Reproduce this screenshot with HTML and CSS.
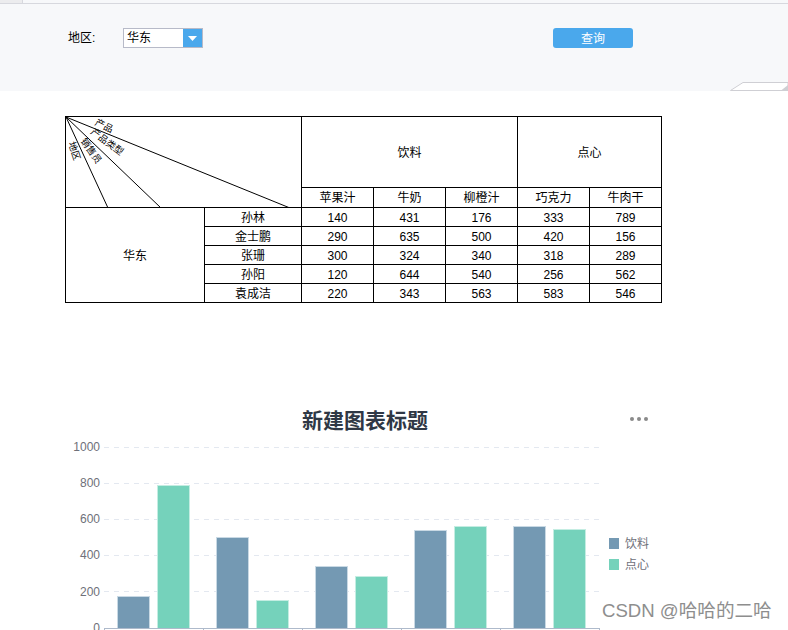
FILE: index.html
```html
<!DOCTYPE html>
<html lang="zh-CN">
<head>
<meta charset="utf-8">
<title>报表</title>
<link rel="stylesheet" href="styles.css">
</head>
<body>
<div class="topbar"><div class="topbar-left"></div></div>
<div class="filter">
  <div class="field">
    <span class="label">地区:</span>
    <div class="select">
      <span class="select-value">华东</span>
      <span class="select-btn"><svg width="9" height="5" viewBox="0 0 9 5"><path d="M0 0H9L4.5 5Z" fill="#fff"/></svg></span>
    </div>
  </div>
  <button class="query">查询</button>
  <svg class="tab" width="58" height="9" viewBox="0 0 58 9"><path d="M13 0.5H58V8.5H0.5Z" fill="#fff" stroke="#cfcfd4"/><path d="M51 8.5L58 3V8.5Z" fill="#cfcfd4"/></svg>
</div>

<table class="report">
  <colgroup>
    <col class="c-area"><col class="c-name"><col class="c-val"><col class="c-val"><col class="c-val"><col class="c-val"><col class="c-val">
  </colgroup>
  <tr class="h1">
    <td class="diag" rowspan="2" colspan="2">
      <svg class="diag-svg" width="236" height="91" viewBox="0 0 236 91">
        <g stroke="#000" stroke-width="1">
          <line x1="0" y1="0" x2="224" y2="91"/>
          <line x1="0" y1="0" x2="95" y2="91"/>
          <line x1="0" y1="0" x2="42" y2="91"/>
        </g>
        <g class="diag-text">
          <text x="38" y="12" transform="rotate(26 38 9)" text-anchor="middle">产品</text>
          <text x="41" y="28" transform="rotate(37 41 25)" text-anchor="middle">产品类型</text>
          <text x="25" y="37" transform="rotate(55 25 34)" text-anchor="middle">销售员</text>
          <text x="8" y="37" transform="rotate(72 8 34)" text-anchor="middle">地区</text>
        </g>
      </svg>
    </td>
    <td colspan="3">饮料</td>
    <td colspan="2">点心</td>
  </tr>
  <tr class="h2">
    <td>苹果汁</td><td>牛奶</td><td>柳橙汁</td><td>巧克力</td><td>牛肉干</td>
  </tr>
  <tr class="row">
    <td rowspan="5">华东</td><td>孙林</td><td>140</td><td>431</td><td>176</td><td>333</td><td>789</td>
  </tr>
  <tr class="row"><td>金士鹏</td><td>290</td><td>635</td><td>500</td><td>420</td><td>156</td></tr>
  <tr class="row"><td>张珊</td><td>300</td><td>324</td><td>340</td><td>318</td><td>289</td></tr>
  <tr class="row"><td>孙阳</td><td>120</td><td>644</td><td>540</td><td>256</td><td>562</td></tr>
  <tr class="row"><td>袁成洁</td><td>220</td><td>343</td><td>563</td><td>583</td><td>546</td></tr>
</table>

<div class="chart">
  <svg width="788" height="235" viewBox="0 395 788 235">
    <text class="chart-title" x="365" y="428" text-anchor="middle">新建图表标题</text>
    <g fill="#8a8a8a">
      <circle cx="632" cy="419" r="2"/><circle cx="639" cy="419" r="2"/><circle cx="646" cy="419" r="2"/>
    </g>
    <g stroke="#e3e8f0" stroke-width="1" stroke-dasharray="5 5">
      <line x1="104" y1="447.5" x2="600" y2="447.5"/>
      <line x1="104" y1="483.5" x2="600" y2="483.5"/>
      <line x1="104" y1="519.5" x2="600" y2="519.5"/>
      <line x1="104" y1="555.5" x2="600" y2="555.5"/>
      <line x1="104" y1="591.5" x2="600" y2="591.5"/>
    </g>
    <g class="ylab" text-anchor="end">
      <text x="100" y="451">1000</text>
      <text x="100" y="487">800</text>
      <text x="100" y="523">600</text>
      <text x="100" y="559">400</text>
      <text x="100" y="596">200</text>
      <text x="100" y="632">0</text>
    </g>
    <g class="bar-a">
      <rect x="117.5" y="596.5" width="32" height="32"/>
      <rect x="216.5" y="537.5" width="32" height="91"/>
      <rect x="315.5" y="566.5" width="32" height="62"/>
      <rect x="414.5" y="530.5" width="32" height="98"/>
      <rect x="513.5" y="526.5" width="32" height="102"/>
    </g>
    <g class="bar-b">
      <rect x="157.5" y="485.5" width="32" height="143"/>
      <rect x="256.5" y="600.5" width="32" height="28"/>
      <rect x="355.5" y="576.5" width="32" height="52"/>
      <rect x="454.5" y="526.5" width="32" height="102"/>
      <rect x="553.5" y="529.5" width="32" height="99"/>
    </g>
    <g stroke="#aebacb" stroke-width="1">
      <line x1="104" y1="628.5" x2="600" y2="628.5"/>
      <line x1="104.5" y1="628" x2="104.5" y2="633"/>
      <line x1="203.5" y1="628" x2="203.5" y2="633"/>
      <line x1="302.5" y1="628" x2="302.5" y2="633"/>
      <line x1="401.5" y1="628" x2="401.5" y2="633"/>
      <line x1="500.5" y1="628" x2="500.5" y2="633"/>
      <line x1="599.5" y1="628" x2="599.5" y2="633"/>
    </g>
    <rect x="609" y="538" width="10" height="11" fill="#7499b3"/>
    <text class="legend" x="625" y="548">饮料</text>
    <rect x="609" y="559" width="10" height="11" fill="#75d2bb"/>
    <text class="legend" x="625" y="569">点心</text>
  </svg>
</div>

<div class="watermark">CSDN @哈哈的二哈</div>
</body>
</html>
```

FILE: styles.css
```css
html, body {
  margin: 0;
  padding: 0;
  background: #fff;
}
body {
  position: relative;
  width: 788px;
  height: 630px;
  overflow: hidden;
  font-family: "Liberation Sans", "Noto Sans CJK SC", sans-serif;
  font-size: 12px;
  color: #000;
}
.topbar {
  height: 3px;
  border-bottom: 1px solid #d7d8de;
  background: #f7f8fa;
}
.topbar-left {
  width: 22px;
  height: 3px;
  background: #ececee;
  border-right: 1px solid #d7d8de;
}
.filter {
  position: relative;
  height: 87px;
  box-sizing: border-box;
  padding: 24px 0 0 68px;
  background: #f7f8fa;
  display: flex;
  align-items: flex-start;
}
.field {
  display: flex;
  align-items: center;
  height: 20px;
}
.label {
  width: 55px;
  font-size: 12px;
  line-height: 20px;
}
.select {
  width: 80px;
  height: 20px;
  box-sizing: border-box;
  border: 1px solid #b7bac8;
  background: #fff;
  display: flex;
}
.select-value {
  flex: 1;
  padding-left: 3px;
  line-height: 18px;
  font-size: 12px;
}
.select-btn {
  width: 19px;
  background: #4aa8ec;
  display: flex;
  align-items: center;
  justify-content: center;
}
.query {
  margin-left: 350px;
  width: 80px;
  height: 20px;
  padding: 0;
  border: none;
  border-radius: 3px;
  background: #4aa8ec;
  color: #fff;
  font-family: "Noto Sans CJK SC", sans-serif;
  font-size: 12px;
  line-height: 20px;
}
.tab {
  position: absolute;
  left: 730px;
  top: 78px;
}
.report {
  margin: 25px 0 0 65px;
  border-collapse: collapse;
  table-layout: fixed;
  width: 597px;
}
.c-area { width: 139px; }
.c-name { width: 97px; }
.c-val { width: 72px; }
.report td {
  border: 1px solid #000;
  padding: 1px 0 0;
  text-align: center;
  vertical-align: middle;
  font-size: 12px;
  line-height: 14px;
}
.h1 { height: 71px; }
.h2 { height: 20px; }
.row { height: 19px; }
.report td.diag {
  position: relative;
  padding: 0;
}
.diag-svg {
  position: absolute;
  left: 0;
  top: 0;
}
.diag-text text {
  font-family: "Noto Sans CJK SC", sans-serif;
  font-size: 9.5px;
  fill: #000;
}
.chart {
  margin-top: 92px;
  height: 235px;
}
.chart svg {
  display: block;
}
.chart-title {
  font-family: "Noto Sans CJK SC", sans-serif;
  font-size: 21px;
  font-weight: bold;
  fill: #2f3845;
}
.ylab text {
  font-family: "Liberation Sans", sans-serif;
  font-size: 12px;
  fill: #6e7079;
}
.bar-a rect {
  fill: #7499b3;
  stroke: #c9d9e4;
  stroke-width: 1;
}
.bar-b rect {
  fill: #75d2bb;
  stroke: #c4ede2;
  stroke-width: 1;
}
.legend {
  font-family: "Noto Sans CJK SC", sans-serif;
  font-size: 12px;
  fill: #6e7079;
}
.watermark {
  position: absolute;
  left: 602px;
  top: 599px;
  font-family: "Liberation Sans", "Noto Sans CJK SC", sans-serif;
  font-size: 18.6px;
  line-height: 24px;
  color: #8e8e8e;
  text-shadow: 0 0 2px #fff, 0 0 2px #fff;
  white-space: nowrap;
}
```
